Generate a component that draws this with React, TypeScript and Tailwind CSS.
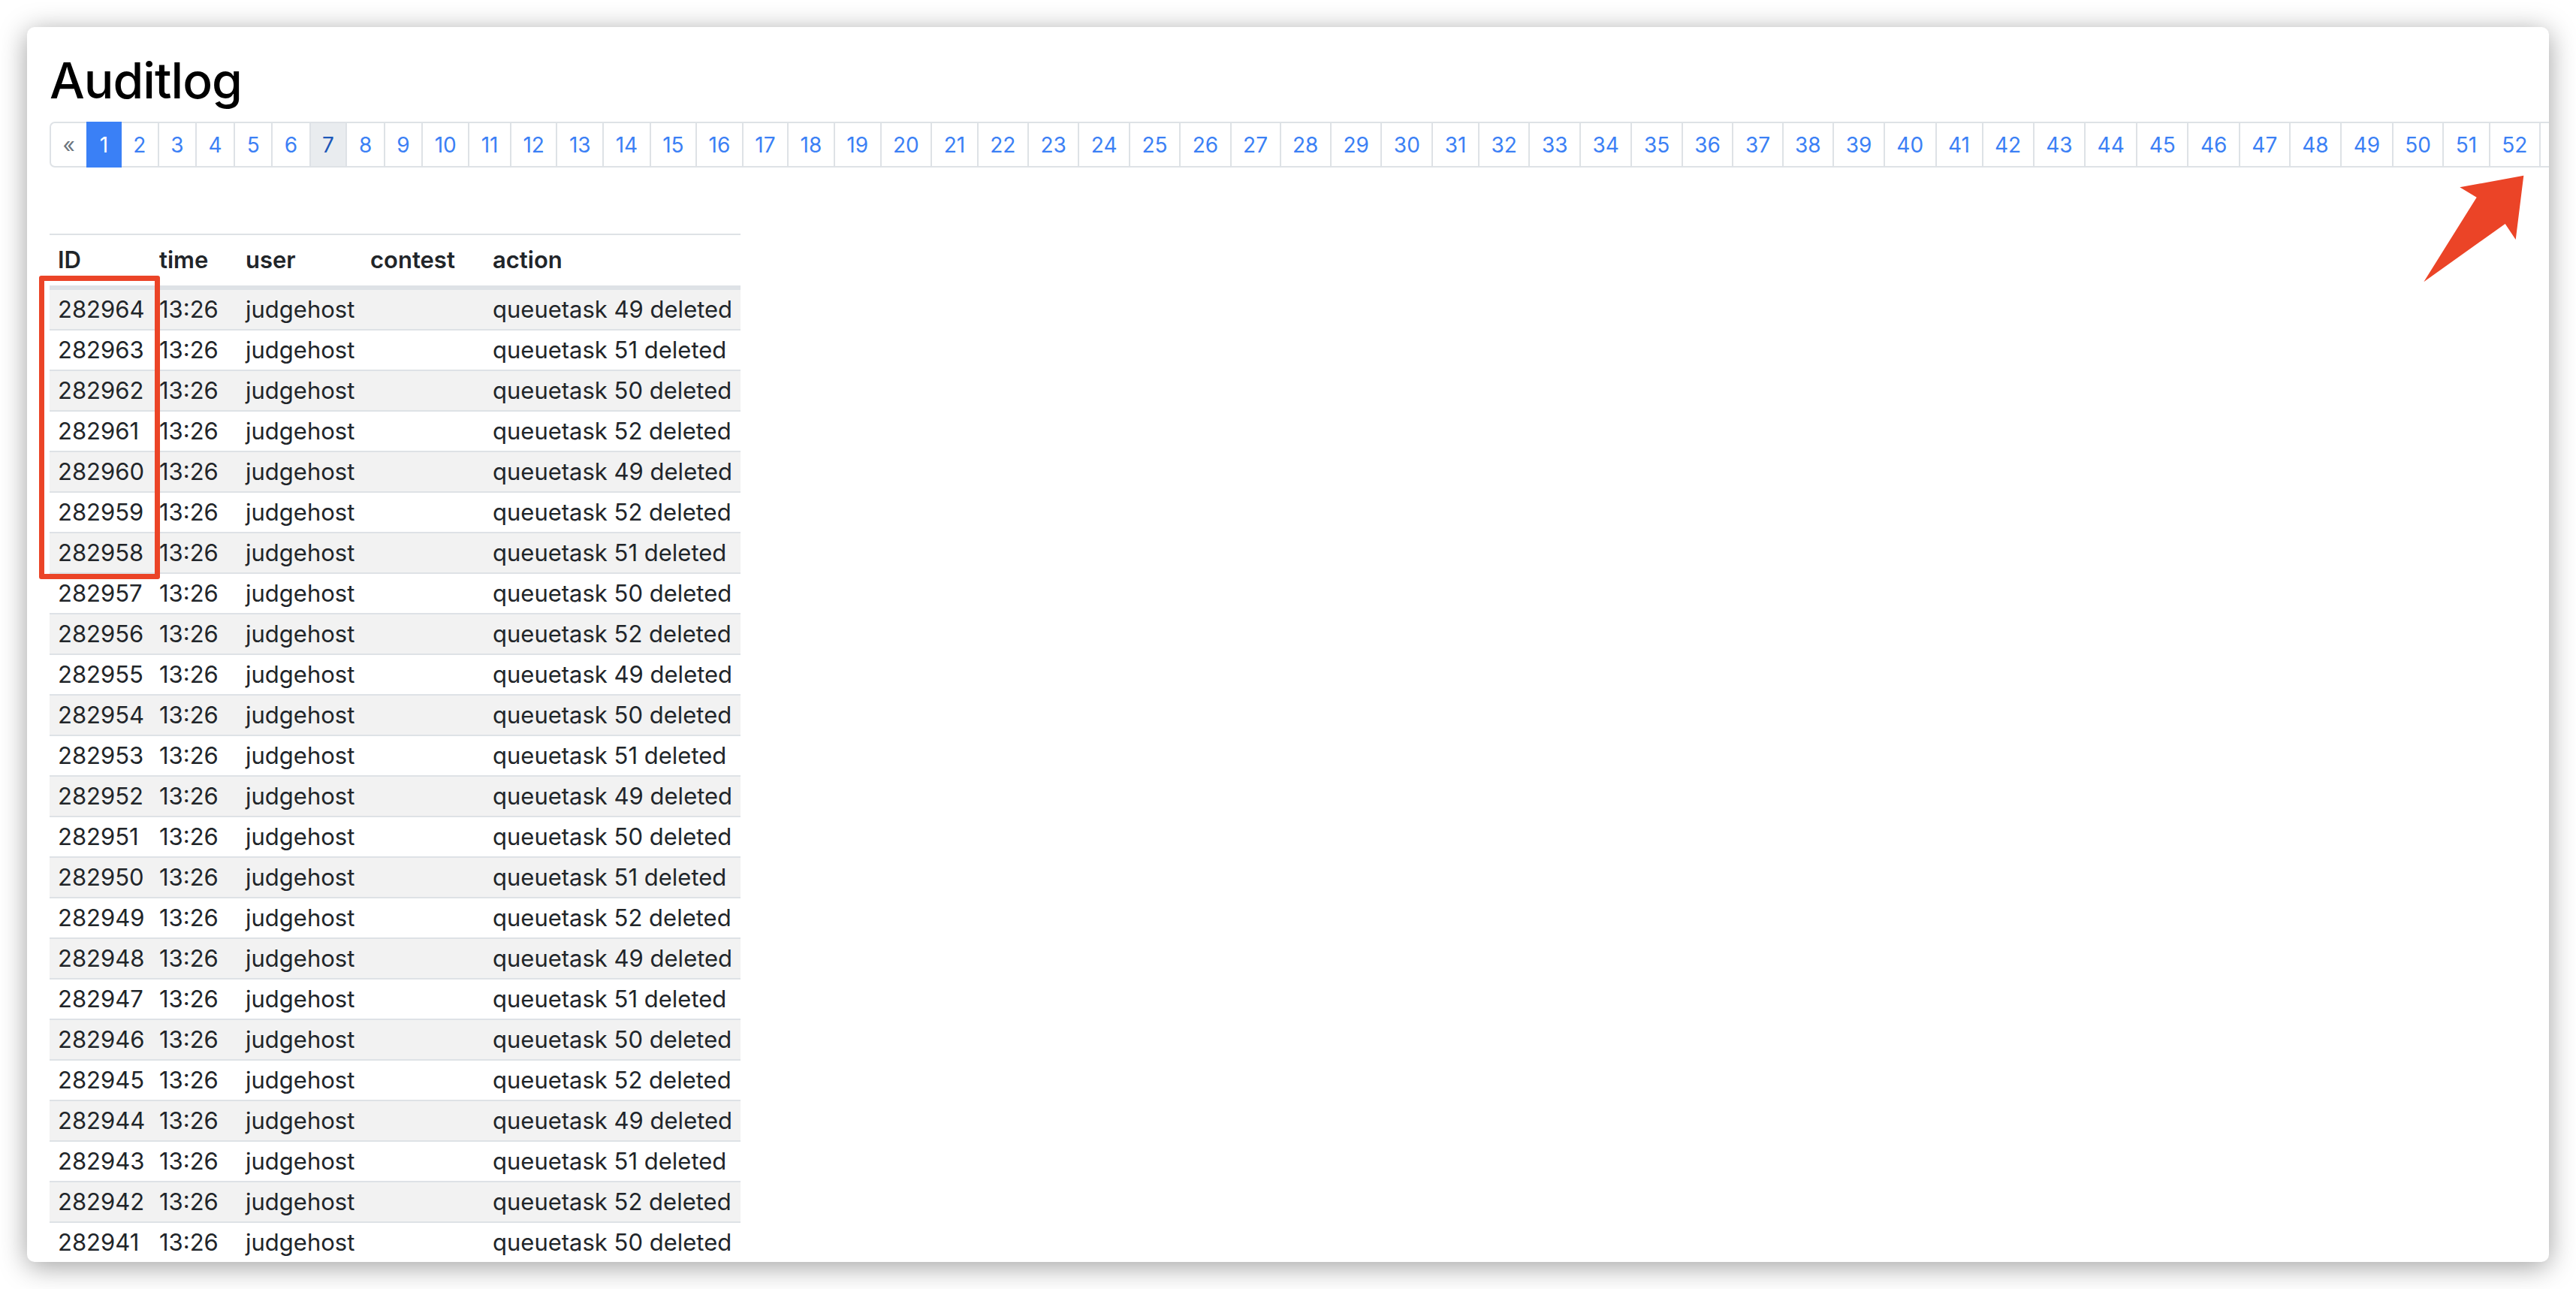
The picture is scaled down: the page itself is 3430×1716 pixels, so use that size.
import React from 'react'

type Row = { id: number; task: number }

const TASKS = [49, 51, 50, 52, 49, 52, 51, 50, 52, 49, 50, 51, 49, 50, 51, 52, 49, 51, 50, 52, 49, 51, 52, 50]

const ROWS: Row[] = TASKS.map((task, i) => ({ id: 282964 - i, task }))

const PAGES = Array.from({ length: 52 }, (_, i) => i + 1)

function PageItem({ label, active, hover, muted }: { label: string; active?: boolean; hover?: boolean; muted?: boolean }) {
  let cls = 'bg-white border-[#dee2e6] text-[#3b80f5]'
  if (active) cls = 'bg-[#3a80f6] border-[#3a80f6] text-white relative z-10'
  else if (hover) cls = 'bg-[#e9ecef] border-[#dee2e6] text-[#1d58b8]'
  else if (muted) cls = 'bg-white border-[#dee2e6] text-[#6c757d]'
  return (
    <li className={`-ml-[2px] first:ml-0 first:rounded-l-[7px] h-[61px] border-2 px-[15.5px] flex items-center shrink-0 ${cls}`}>
      {label}
    </li>
  )
}

export default function App() {
  return (
    <div className="relative w-[3430px] h-[1716px] bg-white p-[36px] font-['Inter',sans-serif] overflow-hidden">
      <div className="relative w-full h-full bg-white rounded-[10px] overflow-hidden shadow-[0_6px_36px_rgba(0,0,0,0.38)] pl-[30px] pt-[38px]">
        <h1 className="text-[66px] leading-none font-medium text-black tracking-[-0.015em]">Auditlog</h1>

        {/* pagination, runs past the right edge of the window */}
        <ul className="mt-[22px] flex text-[28px] leading-none">
          <PageItem label="«" muted />
          {PAGES.map((p) => (
            <PageItem key={p} label={String(p)} active={p === 1} hover={p === 7} />
          ))}
          <li aria-hidden className="-ml-[2px] h-[61px] w-[66px] border-2 border-[#dee2e6] bg-white shrink-0" />
        </ul>

        {/* audit table */}
        <table className="mt-[88px] table-fixed border-separate border-spacing-0 w-[920px] text-[#212529] text-[31px]">
          <thead>
            <tr>
              {[
                ['ID', 'w-[135px]'],
                ['time', 'w-[115px]'],
                ['user', 'w-[166px]'],
                ['contest', 'w-[163px]'],
                ['action', 'w-[341px]'],
              ].map(([h, w]) => (
                <th key={h} className={`${w} p-0 text-left font-semibold border-t-2 border-b-4 border-[#dee2e6]`}>
                  <div className="h-[67px] flex items-center px-[11px]">{h}</div>
                </th>
              ))}
            </tr>
          </thead>
          <tbody>
            {ROWS.map((r, i) => {
              const bg = i % 2 === 0 ? 'bg-[#f2f2f2]' : 'bg-white'
              const td = `p-0 border-t-2 border-[#dee2e6] ${bg}`
              return (
                <tr key={r.id}>
                  <td className={td}>
                    <div className="h-[52px] flex items-center px-[11px] whitespace-nowrap">{r.id}</div>
                  </td>
                  <td className={td}>
                    <div className="h-[52px] flex items-center px-[11px] whitespace-nowrap">13:26</div>
                  </td>
                  <td className={td}>
                    <div className="h-[52px] flex items-center px-[11px] whitespace-nowrap">judgehost</div>
                  </td>
                  <td className={td}>
                    <div className="h-[52px] flex items-center px-[11px]"></div>
                  </td>
                  <td className={td}>
                    <div className="h-[52px] flex items-center px-[11px] whitespace-nowrap">queuetask {r.task} deleted</div>
                  </td>
                </tr>
              )
            })}
          </tbody>
        </table>
      </div>

      {/* annotations */}
      <div className="absolute left-[52px] top-[367px] w-[161px] h-[404px] border-[7px] border-[#eb4427] rounded-[3px]" />
      <svg className="absolute left-[3220px] top-[228px]" width="150" height="155" viewBox="0 0 150 155">
        <polygon points="140.3,5.7 55.3,21.3 77.7,34.7 7.3,147.3 115.7,70 129.7,91" fill="#eb4427" />
      </svg>
    </div>
  )
}
